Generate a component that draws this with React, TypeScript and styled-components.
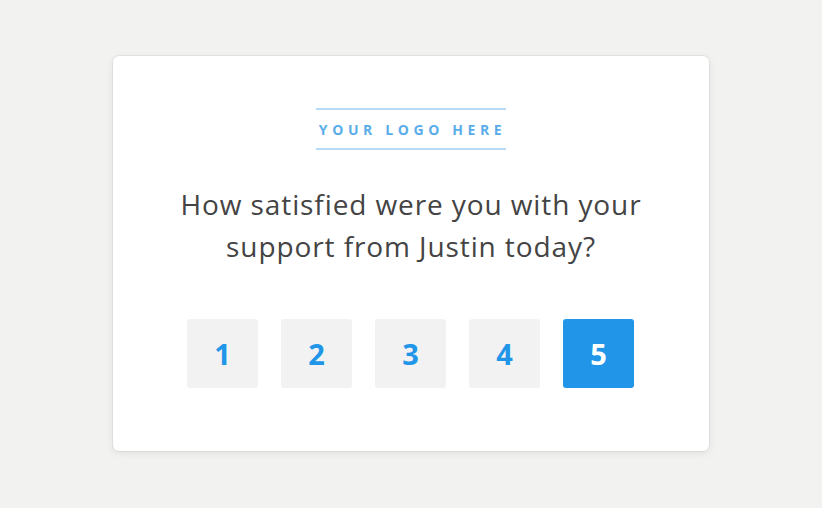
import { createGlobalStyle, styled } from "styled-components";

const Global = createGlobalStyle`
  html, body { margin: 0; padding: 0; }
  body {
    background: #f2f2f1;
    font-family: "Open Sans", Lato, sans-serif;
  }
`;

const Page = styled.div`
  width: 822px;
  height: 508px;
  display: flex;
  align-items: center;
  justify-content: center;
`;

const Card = styled.div`
  box-sizing: border-box;
  width: 596px;
  height: 395px;
  margin-top: -1px;
  background: #fff;
  border-radius: 6px;
  box-shadow: 0 0 0 1px rgba(0, 0, 0, 0.05), 0 2px 8px rgba(0, 0, 0, 0.08);
  display: flex;
  flex-direction: column;
  align-items: center;
  padding-top: 52px;
`;

const Logo = styled.div`
  box-sizing: border-box;
  width: 190px;
  height: 42px;
  border-top: 2px solid #b6dbf6;
  border-bottom: 2px solid #b6dbf6;
  display: flex;
  align-items: center;
  justify-content: center;
  color: #5aade9;
  font-size: 14px;
  font-weight: 700;
  letter-spacing: 4.6px;
  padding-left: 4px;
  margin-left: -1px;
  white-space: nowrap;
`;

const Question = styled.h1`
  margin: 33px 0 0;
  font-size: 28px;
  font-weight: 400;
  line-height: 42px;
  letter-spacing: 0.9px;
  color: #444;
  text-align: center;
`;

const Scale = styled.div`
  display: flex;
  gap: 23px;
  margin-top: 52px;
  margin-left: -1px;
`;

const Choice = styled.button<{ $active?: boolean }>`
  width: 71px;
  height: 69px;
  border: 0;
  border-radius: 3px;
  background: ${p => (p.$active ? "#2196e9" : "#f2f2f2")};
  color: ${p => (p.$active ? "#fff" : "#2196e9")};
  font-family: "Open Sans", sans-serif;
  font-size: 29px;
  font-weight: 700;
  display: flex;
  align-items: center;
  justify-content: center;
  cursor: pointer;
`;

export default function App() {
  return (
    <>
      <Global />
      <Page>
        <Card>
          <Logo>YOUR LOGO HERE</Logo>
          <Question>
            How satisfied were you with your
            <br />
            support from Justin today?
          </Question>
          <Scale>
            {[1, 2, 3, 4, 5].map(n => (
              <Choice key={n} $active={n === 5}>
                {n}
              </Choice>
            ))}
          </Scale>
        </Card>
      </Page>
    </>
  );
}
